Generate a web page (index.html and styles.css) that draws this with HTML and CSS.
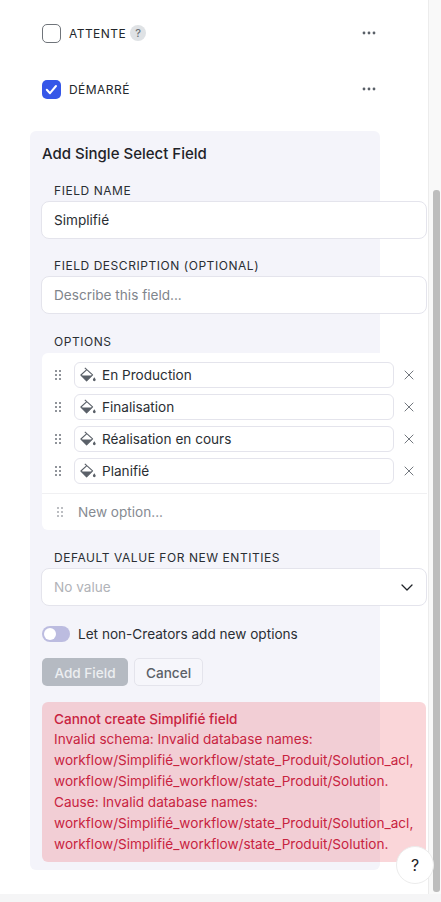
FILE: index.html
```html
<!DOCTYPE html>
<html lang="fr">
<head>
<meta charset="utf-8">
<title>Add Single Select Field</title>
<link rel="stylesheet" href="styles.css">
</head>
<body>
<div class="page">
  <div class="main">
    <div class="content">
      <div class="state-row">
        <span class="check"></span>
        <span class="state-name">ATTENTE</span>
        <span class="hint">?</span>
        <svg class="dots" viewBox="0 0 14 4"><circle cx="2" cy="2" r="1.4"/><circle cx="7" cy="2" r="1.4"/><circle cx="12" cy="2" r="1.4"/></svg>
      </div>
      <div class="state-row">
        <span class="check checked"><svg viewBox="0 0 19 19"><path d="M4.8 9.8l3.2 3.4 6-7.2" fill="none" stroke="#fff" stroke-width="2" stroke-linecap="round" stroke-linejoin="round"/></svg></span>
        <span class="state-name">DÉMARRÉ</span>
        <svg class="dots" viewBox="0 0 14 4"><circle cx="2" cy="2" r="1.4"/><circle cx="7" cy="2" r="1.4"/><circle cx="12" cy="2" r="1.4"/></svg>
      </div>
      <section class="panel">
        <h2 class="title">Add Single Select Field</h2>
        <div class="label">FIELD NAME</div>
        <div class="field">Simplifié</div>
        <div class="label">FIELD DESCRIPTION (OPTIONAL)</div>
        <div class="field placeholder">Describe this field...</div>
        <div class="label spaced">OPTIONS</div>
        <div class="options">
          <div class="option">
            <svg class="grip" viewBox="0 0 8 12"><use href="#grip"/></svg>
            <div class="option-input"><svg class="bucket" viewBox="0 0 16 16"><use href="#bucket"/></svg>En Production</div>
            <svg class="remove" viewBox="0 0 10 10"><use href="#cross"/></svg>
          </div>
          <div class="option">
            <svg class="grip" viewBox="0 0 8 12"><use href="#grip"/></svg>
            <div class="option-input"><svg class="bucket" viewBox="0 0 16 16"><use href="#bucket"/></svg>Finalisation</div>
            <svg class="remove" viewBox="0 0 10 10"><use href="#cross"/></svg>
          </div>
          <div class="option">
            <svg class="grip" viewBox="0 0 8 12"><use href="#grip"/></svg>
            <div class="option-input"><svg class="bucket" viewBox="0 0 16 16"><use href="#bucket"/></svg>Réalisation en cours</div>
            <svg class="remove" viewBox="0 0 10 10"><use href="#cross"/></svg>
          </div>
          <div class="option">
            <svg class="grip" viewBox="0 0 8 12"><use href="#grip"/></svg>
            <div class="option-input"><svg class="bucket" viewBox="0 0 16 16"><use href="#bucket"/></svg>Planifié</div>
            <svg class="remove" viewBox="0 0 10 10"><use href="#cross"/></svg>
          </div>
          <div class="new-option">
            <svg class="grip faint" viewBox="0 0 8 12"><use href="#grip"/></svg>
            <span>New option...</span>
          </div>
        </div>
        <div class="label spaced">DEFAULT VALUE FOR NEW ENTITIES</div>
        <div class="field select">
          <span>No value</span>
          <svg class="chevron" viewBox="0 0 12 7"><path d="M1 1l5 5 5-5" fill="none" stroke="#1f2328" stroke-width="1.3" stroke-linecap="round" stroke-linejoin="round"/></svg>
        </div>
        <div class="toggle-row">
          <span class="toggle"><span class="knob"></span></span>
          <span>Let non-Creators add new options</span>
        </div>
        <div class="buttons">
          <span class="btn primary">Add Field</span>
          <span class="btn secondary">Cancel</span>
        </div>
        <div class="error">
          <div class="error-title">Cannot create Simplifié field</div>
          <div>Invalid schema: Invalid database names:</div>
          <div>workflow/Simplifié_workflow/state_Produit/Solution_acl,</div>
          <div>workflow/Simplifié_workflow/state_Produit/Solution.</div>
          <div>Cause: Invalid database names:</div>
          <div>workflow/Simplifié_workflow/state_Produit/Solution_acl,</div>
          <div>workflow/Simplifié_workflow/state_Produit/Solution.</div>
        </div>
      </section>
    </div>
    <div class="track"><div class="thumb"></div></div>
    <div class="help">?</div>
  </div>
  <div class="footer"></div>
</div>
<svg class="defs" aria-hidden="true">
  <symbol id="grip" viewBox="0 0 8 12"><g fill="#6b7178"><circle cx="2" cy="2" r="1"/><circle cx="6" cy="2" r="1"/><circle cx="2" cy="6" r="1"/><circle cx="6" cy="6" r="1"/><circle cx="2" cy="10" r="1"/><circle cx="6" cy="10" r="1"/></g></symbol>
  <symbol id="cross" viewBox="0 0 10 10"><path d="M.7.7l8.6 8.6M9.3.7L.7 9.3" fill="none" stroke="#72777e" stroke-width="1"/></symbol>
  <symbol id="bucket" viewBox="0 0 16 16"><path d="M4.8.8l2 1.9 5.8 5.1-6 6L.9 8 6.8 2.7" fill="none" stroke="#5a6068" stroke-width="1.1" stroke-linejoin="round"/><path d="M1.3 8.4h10.8l-5.5 5.3z" fill="#5a6068"/><path d="M14.3 10.2c.8 1.1 1.4 1.9 1.4 2.6a1.4 1.4 0 0 1-2.8 0c0-.7.6-1.5 1.4-2.6z" fill="#5a6068"/></symbol>
</svg>
</body>
</html>
```
FILE: styles.css
```css
* { box-sizing: border-box; }
html, body { margin: 0; padding: 0; }
body {
  font-family: Inter, "Liberation Sans", sans-serif;
  color: #1f2328;
  background: #fff;
  overflow: hidden;
}
.page { width: 441px; height: 902px; display: flex; flex-direction: column; overflow: hidden; }
.main { position: relative; flex: 1; display: flex; min-height: 0; }
.content { width: 429px; padding: 5px 0 0 30px; overflow: hidden; border-right: 1px solid #ececec; }
.state-row { display: flex; align-items: center; height: 56px; padding-left: 12px; width: 350px; }
.check { width: 19px; height: 19px; border: 1px solid #6f747a; border-radius: 5px; flex: none; background: #fff; }
.check.checked { border: 0; background: #3657e8; }
.check svg { display: block; width: 19px; height: 19px; }
.state-name { margin-left: 8px; font-size: 12px; letter-spacing: .45px; color: #23272c; }
.hint { margin-left: 4px; width: 16px; height: 16px; border-radius: 50%; background: #dfe2e5; color: #6c7278; font-size: 11px; font-weight: 500; line-height: 16px; text-align: center; }
.dots { width: 14px; height: 4px; margin-left: auto; margin-right: 4px; fill: #5a6068; }
.panel { width: 350px; height: 739px; margin-top: 14px; padding: 13px 0 0 12px; background: #f4f4fa; border-radius: 6px; }
.title { margin: 0; font-size: 15px; line-height: 20px; font-weight: 500; color: #1f2328; }
.label { height: 16px; margin: 19px 0 2px 12px; font-size: 12px; line-height: 16px; letter-spacing: .55px; color: #2a2e33; white-space: nowrap; }
.label.spaced { margin-top: 20px; margin-bottom: 1px; }
.field { width: 386px; height: 38px; margin-left: -1px; padding: 0 12px; display: flex; align-items: center; font-size: 13.6px; background: #fff; border: 1px solid #e4e4ec; border-radius: 8px; color: #2a2e33; }
.field.placeholder { color: #80858c; }
.select { justify-content: space-between; color: #b1b3b8; padding-right: 13px; margin-top: 2px; }
.chevron { width: 12px; height: 7px; }
.options { width: 385px; height: 177px; margin-top: 3px; padding-top: 9px; background: #fff; border-radius: 6px; }
.option { display: flex; align-items: center; height: 26px; margin-bottom: 6px; }
.grip { width: 8px; height: 12px; margin-left: 12px; flex: none; }
.grip.faint { margin-left: 14px; opacity: .6; }
.option-input { width: 320px; height: 26px; margin-left: 12px; padding-left: 5px; display: flex; align-items: center; gap: 6px; font-size: 13.6px; color: #2a2e33; border: 1px solid #e4e4ec; border-radius: 6px; background: #fff; }
.bucket { width: 16px; height: 16px; flex: none; }
.remove { width: 10px; height: 10px; margin-left: 10px; flex: none; }
.new-option { display: flex; align-items: center; height: 37px; margin-top: 9px; border-top: 1px solid #f0f0f2; font-size: 13.6px; color: #868b92; }
.new-option span { margin-left: 14px; }
.toggle-row { display: flex; align-items: center; gap: 8px; height: 16px; margin-top: 20px; font-size: 13.6px; color: #2a2e33; }
.toggle { display: block; width: 28px; height: 16px; padding: 2px; border-radius: 8px; background: #bcbce0; flex: none; }
.knob { display: block; width: 12px; height: 12px; border-radius: 50%; background: #fff; }
.buttons { display: flex; gap: 6px; margin-top: 16px; }
.btn { display: flex; align-items: center; justify-content: center; height: 28px; padding-top: 2px; border-radius: 5px; font-size: 13.6px; font-weight: 500; }
.primary { width: 86px; background: #b5bac2; color: #eceef1; }
.secondary { width: 69px; color: #5b6068; border: 1px solid #e4e4ec; background: #f6f6fb; }
.error { width: 384px; height: 160px; margin-top: 16px; padding: 7px 0 0 12px; font-size: 13.6px; line-height: 21px; color: #c8233f; background: rgba(240, 130, 140, .33); border-radius: 6px; white-space: nowrap; }
.error-title { font-weight: 500; line-height: 20px; }
.track { width: 12px; padding: 190px 1px 2px 4px; background: #f9f9f9; }
.thumb { height: 100%; background: #bdbdbd; border-radius: 3px; }
.help { position: absolute; left: 396px; top: 846px; width: 38px; height: 38px; border-radius: 50%; background: #fff; border: 1px solid #ececec; font-size: 16px; line-height: 36px; text-align: center; color: #1f2328; }
.footer { height: 8px; background: #f5f5f6; flex: none; }
.defs { position: absolute; width: 0; height: 0; }
```
